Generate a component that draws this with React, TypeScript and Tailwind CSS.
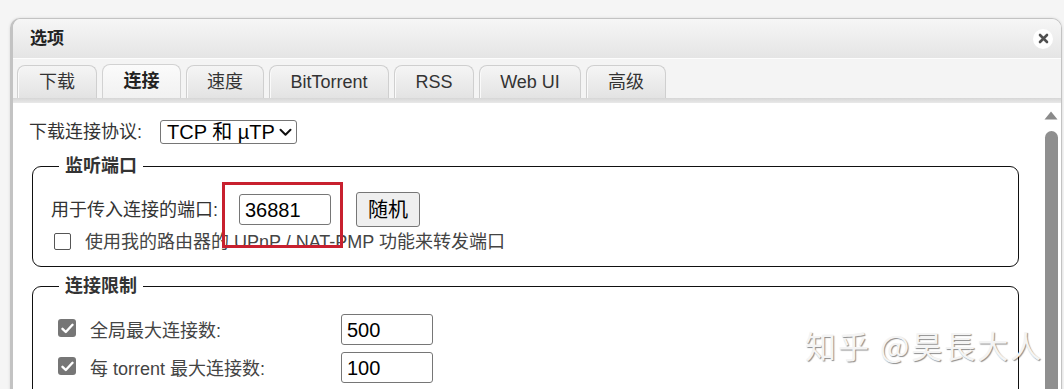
import React from "react";

const FONT = { fontFamily: "'Liberation Sans', Arial, 'Noto Sans CJK SC', sans-serif" };

function Tab({ label, active, w }: { label: string; active?: boolean; w: string }) {
  return (
    <div
      className={
        w +
        " shrink-0 flex items-center justify-center rounded-t-[8px] border border-b-0 text-[18px] " +
        (active
          ? "h-[34px] border-[#d2d2d2] bg-gradient-to-b from-[#fbfbfb] to-[#f1f1f1] font-bold text-[#222]"
          : "h-[33px] border-[#cfcfcf] bg-gradient-to-b from-[#f5f5f5] to-[#e3e3e3] text-[#333] shadow-[inset_1px_0_0_#fafafa]")
      }
    >
      {label}
    </div>
  );
}

function CheckedBox() {
  return (
    <div className="w-[18px] h-[18px] rounded-[3px] bg-[#767676] flex items-center justify-center shrink-0">
      <svg width="13" height="11" viewBox="0 0 13 11">
        <path d="M1.5 5.8 L4.8 9 L11.5 1.8" fill="none" stroke="#fff" strokeWidth="2.4" strokeLinecap="round" strokeLinejoin="round" />
      </svg>
    </div>
  );
}

export default function App() {
  return (
    <div className="relative w-[1064px] h-[389px] overflow-hidden bg-[#f5f5f5]" style={FONT}>
      <div className="ml-[10px] mt-[18px] w-[1052px] h-[420px] rounded-t-[10px] border border-l-[3px] border-[#c3c3c3] flex flex-col overflow-hidden shadow-[0_0_3px_rgba(0,0,0,0.12)]">
        {/* title bar */}
        <div className="h-[39px] shrink-0 flex items-center justify-between pl-[17px] pr-[8px] bg-gradient-to-b from-[#f6f6f6] to-[#e5e5e5]">
          <span className="text-[17px] font-bold text-[#222]">选项</span>
          <div className="w-[20px] h-[20px] rounded-full bg-white flex items-center justify-center">
            <svg width="11" height="11" viewBox="0 0 11 11">
              <path d="M2 2 L9 9 M9 2 L2 9" stroke="#505050" strokeWidth="2.6" strokeLinecap="round" />
            </svg>
          </div>
        </div>
        {/* tab bar */}
        <div className="h-[40px] shrink-0 border-t border-[#fdfdfd] bg-[#f4f4f4] flex items-end gap-[5px] pl-[4px]">
          <Tab label="下载" w="w-[80px]" />
          <Tab label="连接" w="w-[79px]" active />
          <Tab label="速度" w="w-[78px]" />
          <Tab label="BitTorrent" w="w-[120px]" />
          <Tab label="RSS" w="w-[80px]" />
          <Tab label="Web UI" w="w-[102px]" />
          <Tab label="高级" w="w-[80px]" />
        </div>
        <div className="h-[5px] shrink-0 bg-gradient-to-b from-[#d6d6d6] to-[#e9e9e9]" />
        {/* content */}
        <div className="flex-1 flex bg-white">
          <div className="flex-1 pl-[16px] pt-[17px] text-[#333]">
            <div className="flex items-center h-[24px]">
              <span className="text-[18px] w-[131px]">下载连接协议:</span>
              <div className="h-[24px] w-[137px] border border-[#767676] rounded-[3px] flex items-center justify-between pl-[6px] pr-[4px] text-[20px] leading-none text-black">
                <span>TCP 和 µTP</span>
                <svg width="13" height="9" viewBox="0 0 13 9">
                  <path d="M1.5 1.8 L6.5 6.8 L11.5 1.8" fill="none" stroke="#111" strokeWidth="2" strokeLinecap="round" strokeLinejoin="round" />
                </svg>
              </div>
            </div>

            <fieldset className="mt-[10px] ml-[3px] mr-[24px] border border-[#111] rounded-[9px] px-[18px] pb-[14px]">
              <legend className="ml-[8px] px-[6px] text-[18px] leading-[24px] font-bold text-[#333]">监听端口</legend>
              <div className="mt-[14px] flex items-center h-[35px]">
                <span className="text-[18px] w-[188px] pt-[2px]">用于传入连接的端口:</span>
                <div className="w-[92px] h-[31px] border border-[#767676] rounded-[3px] flex items-center pl-[5px] text-[20px] text-black">36881</div>
                <div className="ml-[25px] w-[64px] h-[35px] border border-[#767676] rounded-[3px] bg-[#efefef] flex items-center justify-center text-[20px] text-black">随机</div>
              </div>
              <div className="mt-[3px] flex items-center h-[22px]">
                <div className="ml-[3px] w-[17px] h-[17px] border-[1.5px] border-[#555] rounded-[2px] bg-white shrink-0" />
                <span className="ml-[14px] text-[18px] text-[#444] pt-[3px]">使用我的路由器的 UPnP / NAT-PMP 功能来转发端口</span>
              </div>
            </fieldset>

            <fieldset className="mt-[7px] ml-[3px] mr-[24px] border border-[#111] rounded-[9px] px-[18px] pb-[14px]">
              <legend className="ml-[8px] px-[6px] text-[18px] leading-[24px] font-bold text-[#333]">连接限制</legend>
              <div className="mt-[16px] flex items-center h-[31px]">
                <div className="ml-[7px] -mt-[3px]"><CheckedBox /></div>
                <span className="ml-[14px] text-[18px] text-[#444] w-[251px] pt-[4px]">全局最大连接数:</span>
                <div className="w-[92px] h-[31px] border border-[#767676] rounded-[3px] flex items-center pl-[5px] text-[20px] text-black">500</div>
              </div>
              <div className="mt-[7px] flex items-center h-[31px]">
                <div className="ml-[7px] -mt-[3px]"><CheckedBox /></div>
                <span className="ml-[14px] text-[18px] text-[#444] w-[251px] pt-[4px]">每 torrent 最大连接数:</span>
                <div className="w-[92px] h-[31px] border border-[#767676] rounded-[3px] flex items-center pl-[5px] text-[20px] text-black">100</div>
              </div>
            </fieldset>
          </div>
          {/* scrollbar */}
          <div className="w-[18px] shrink-0 flex flex-col items-center pt-[8px] pr-[2px]">
            <svg width="14" height="9" viewBox="0 0 14 9">
              <path d="M7 0.5 L13.5 8.5 L0.5 8.5 Z" fill="#8a8a8a" />
            </svg>
            <div className="mt-[11px] w-[13px] h-[300px] rounded-t-full bg-[#8f8f8f]" />
          </div>
        </div>
      </div>

      {/* annotation */}
      <div className="absolute left-[222px] top-[182px] w-[121px] h-[66px] border-[3px] border-[#c8202f]" />
      {/* watermark */}
      <div
        className="absolute left-[805px] top-[326px] text-[31px] leading-[38px] tracking-[2px] text-[#f4f4f4] whitespace-nowrap"
        style={{ fontFamily: "'Noto Sans CJK SC', sans-serif", textShadow: "1px 1px 1px rgba(0,0,0,0.45)" }}
      >
        知乎 @昊長大人
      </div>
    </div>
  );
}
